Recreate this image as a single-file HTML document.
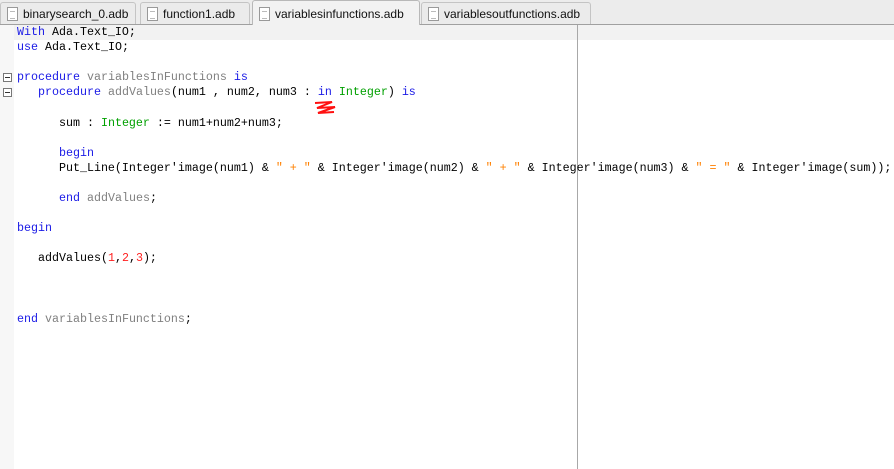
<!DOCTYPE html>
<html><head><meta charset="utf-8"><style>
*{margin:0;padding:0;box-sizing:border-box}
body{width:894px;height:469px;overflow:hidden;background:#fff;position:relative;font-family:"Liberation Mono",monospace}
#tabs{position:absolute;left:0;top:0;width:894px;height:25px;background:#ececec;border-bottom:1px solid #a0a0a0}
.tab{position:absolute;top:2px;height:22px;border:1px solid #c4c4c4;border-bottom:none;border-radius:3px 3px 0 0;background:#ebebeb;font-family:"Liberation Sans",sans-serif;font-size:12px;color:#111;padding:4px 0 0 22px;white-space:nowrap}
.tab.act{top:0;height:25px;background:#f2f2f2;border-color:#b8b8b8;padding-top:6px}
.ic{position:absolute;left:6px;top:4px;width:11px;height:14px;border:1px solid #999;background:#fff}
.act .ic{top:6px}
.ic:before{content:"";position:absolute;left:2px;top:3px;width:5px;height:6px;border-top:1px solid #bbb;border-bottom:1px solid #bbb}
#gut{position:absolute;left:0;top:25px;width:14px;height:444px;background:#f7f7f7}
#cur{position:absolute;left:14px;top:25px;width:880px;height:15px;background:#f2f2f2}
#vl{position:absolute;left:577px;top:25px;width:1px;height:444px;background:#a8a8a8}
pre{position:absolute;left:17px;top:25px;font-size:11.67px;line-height:15.1px;color:#000;font-family:"Liberation Mono",monospace}
.k{color:#1a1ae6}.g{color:#808080}.t{color:#00a000}.s{color:#ff8000}.n{color:#ff2020}
.fold{position:absolute;left:3px;width:9px;height:9px;border:1px solid #777;background:#fff}
.fold:after{content:"";position:absolute;left:1px;top:3px;width:5px;height:1px;background:#333}
</style></head><body>
<div id="tabs">
<div class="tab" style="left:0;width:136px"><span class="ic"></span>binarysearch_0.adb</div>
<div class="tab" style="left:140px;width:110px"><span class="ic"></span>function1.adb</div>
<div class="tab act" style="left:252px;width:168px"><span class="ic"></span>variablesinfunctions.adb</div>
<div class="tab" style="left:421px;width:170px"><span class="ic"></span>variablesoutfunctions.adb</div>
</div>
<div id="gut"></div>
<div id="cur"></div>
<div id="vl"></div>
<div class="fold" style="top:73px"></div>
<div class="fold" style="top:88px"></div>
<pre><span class="k">With</span> Ada.Text_IO;
<span class="k">use</span> Ada.Text_IO;

<span class="k">procedure</span> <span class="g">variablesInFunctions</span> <span class="k">is</span>
   <span class="k">procedure</span> <span class="g">addValues</span>(num1 , num2, num3 : <span class="k">in</span> <span class="t">Integer</span>) <span class="k">is</span>

      sum : <span class="t">Integer</span> := num1+num2+num3;

      <span class="k">begin</span>
      Put_Line(Integer'image(num1) &amp; <span class="s">" + "</span> &amp; Integer'image(num2) &amp; <span class="s">" + "</span> &amp; Integer'image(num3) &amp; <span class="s">" = "</span> &amp; Integer'image(sum));

      <span class="k">end</span> <span class="g">addValues</span>;

<span class="k">begin</span>

   addValues(<span class="n">1</span>,<span class="n">2</span>,<span class="n">3</span>);



<span class="k">end</span> <span class="g">variablesInFunctions</span>;
</pre>
<svg style="position:absolute;left:312px;top:100px" width="26" height="18"><path d="M3 3 L20 2 L5 8 L23 7 L6 13 L22 12" fill="none" stroke="#ff1010" stroke-width="2"/></svg>
</body></html>
